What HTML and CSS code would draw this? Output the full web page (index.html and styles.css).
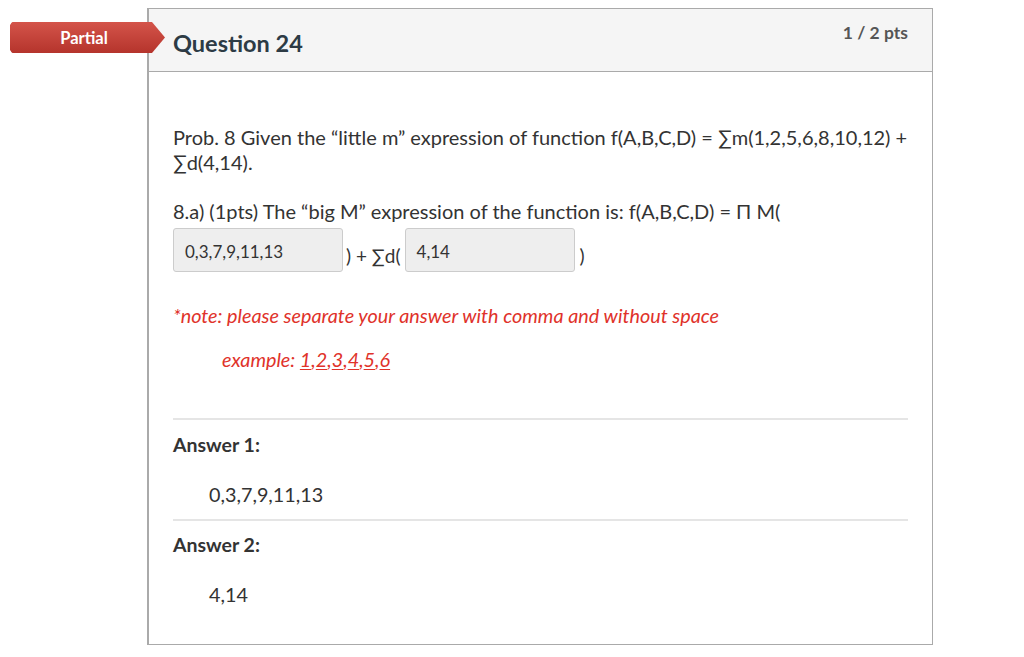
FILE: index.html
```html
<!DOCTYPE html>
<html>
<head>
<meta charset="utf-8">
<link rel="stylesheet" href="styles.css">
</head>
<body>
<div class="page">
  <div class="badge"><span>Partial</span></div>
  <div class="card">
    <div class="header">
      <h2 class="title">Question 24</h2>
      <div class="pts">1 / 2 pts</div>
    </div>
    <div class="body">
      <p class="para">Prob. 8 Given the “little m” expression of function f(A,B,C,D) = ∑m(1,2,5,6,8,10,12) + ∑d(4,14).</p>
      <p class="para para2">8.a) (1pts) The “big M” expression of the function is: f(A,B,C,D) = Π M(</p>
      <div class="inputs">
        <div class="field">0,3,7,9,11,13</div>
        <span class="sep">) + ∑d(</span>
        <div class="field field2">4,14</div>
        <span class="sep sep2">)</span>
      </div>
      <p class="note">*note: please separate your answer with comma and without space</p>
      <p class="note example">example: <u>1</u>,<u>2</u>,<u>3</u>,<u>4</u>,<u>5</u>,<u>6</u></p>
      <div class="answers">
        <div class="answer">
          <div class="alabel">Answer 1:</div>
          <div class="aval">0,3,7,9,11,13</div>
        </div>
        <div class="answer answer2">
          <div class="alabel">Answer 2:</div>
          <div class="aval">4,14</div>
        </div>
      </div>
    </div>
  </div>
</div>
</body>
</html>
```

FILE: styles.css
```css
html, body {
  margin: 0;
  padding: 0;
  background: #fff;
}
body {
  font-family: Lato, "Liberation Sans", sans-serif;
  color: #2d3b45;
}
.page {
  position: relative;
  padding: 8px 0 0 147px;
  width: 786px;
}
.badge {
  position: absolute;
  left: 10px;
  top: 22px;
  width: 155px;
  height: 31px;
  background: linear-gradient(#d4544a, #b5342c);
  clip-path: polygon(0 3px, 2px 0, 142px 0, 155px 15.5px, 142px 31px, 2px 31px, 0 28px);
  border-radius: 3px;
  color: #fff;
  font-weight: 700;
  font-size: 16.5px;
  display: flex;
  align-items: center;
  justify-content: center;
  padding-right: 7px;
  box-sizing: border-box;
}
.badge span { margin-top: 1px; }
.card {
  border: 1px solid #aaa;
  border-left-width: 2px;
  box-sizing: border-box;
  width: 786px;
  height: 637px;
}
.header {
  background: #f5f5f5;
  border-bottom: 1px solid #aaa;
  height: 62px;
  display: flex;
  justify-content: space-between;
  padding: 0 24px 0 24px;
}
.title {
  margin: 20px 0 0 0;
  font-size: 23.5px;
  font-weight: 700;
  color: #2d3b45;
  line-height: 28px;
}
.pts {
  margin-top: 13px;
  font-size: 17.5px;
  font-weight: 700;
  color: #555;
}
.body {
  padding: 53px 24px 0 24px;
  color: #2d3b45;
}
.para {
  margin: 0;
  font-size: 20px;
  line-height: 24.5px;
  color: #333;
}
.para2 {
  margin-top: 25px;
}
.inputs {
  display: flex;
  align-items: center;
  margin-top: 4px;
  font-size: 19px;
  color: #333;
}
.field {
  width: 170px;
  height: 44px;
  box-sizing: border-box;
  border: 1px solid #ccc;
  border-radius: 3px;
  background: #eee;
  font-size: 17px;
  padding: 12px 0 0 11px;
  color: #333;
}
.sep {
  padding: 0 4px 0 3px;
  margin-top: 12px;
}
.sep2 {
  padding: 0 0 0 5px;
}
.note {
  margin: 31px 0 0 0;
  font-style: italic;
  font-size: 19.8px;
  line-height: 24px;
  color: #e0322a;
}
.example {
  margin: 20px 0 0 49px;
}
.example u {
  text-decoration-thickness: 1px;
  text-underline-offset: 2px;
}
.answers {
  margin-top: 47px;
}
.answer {
  border-top: 2px solid #e5e5e5;
  height: 99px;
}
.alabel {
  margin-top: 13px;
  font-weight: 700;
  font-size: 19.5px;
  line-height: 24px;
  color: #333;
}
.aval {
  margin: 25px 0 0 36px;
  font-size: 19.8px;
  line-height: 24px;
  color: #333;
}
.answer2 .alabel {
  margin-top: 12px;
}
```
